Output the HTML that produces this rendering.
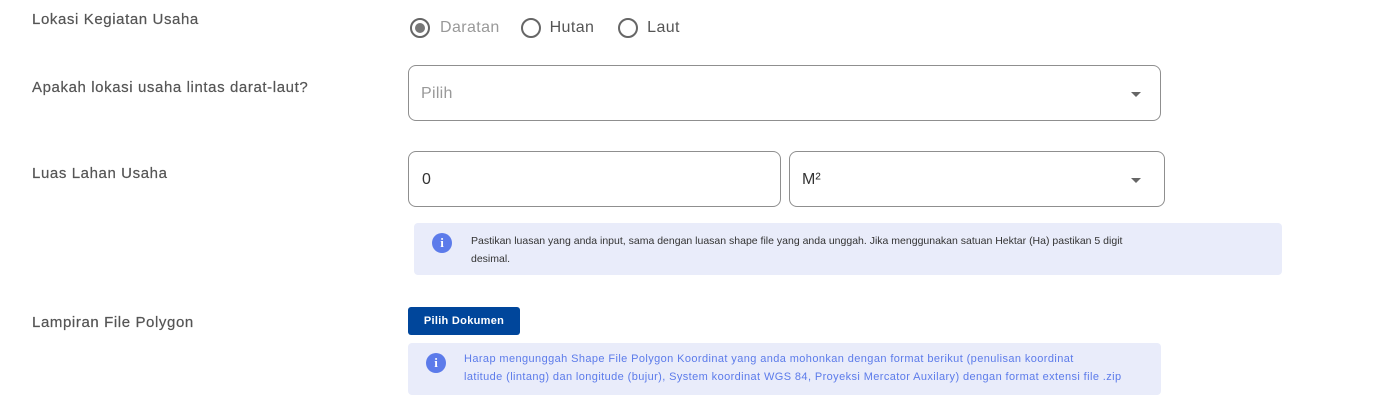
<!DOCTYPE html>
<html><head><meta charset="utf-8"><style>
body{margin:0;width:1382px;height:405px;background:#fff;font-family:"Liberation Sans",sans-serif;position:relative;overflow:hidden}
.a{position:absolute}
.lbl{left:32px;font-size:15px;color:#555;letter-spacing:0.6px;-webkit-text-stroke:0.2px #555}
.box{border:1px solid #8f8f8f;border-radius:8px;box-sizing:border-box;background:#fff}
.caret{position:absolute;width:0;height:0;border-left:5px solid transparent;border-right:5px solid transparent;border-top:5px solid #666}
.radio{display:inline-block;width:20px;height:20px;border:2px solid #666;border-radius:50%;box-sizing:border-box;vertical-align:middle;position:relative}
.info{background:#e9ecfa;border-radius:4px}
.ic{position:absolute;width:20px;height:20px;border-radius:50%;background:#5c7bea;color:#fff;font-size:13px;font-weight:bold;text-align:center;line-height:20px;font-family:"Liberation Serif",serif}
</style></head><body>
<div class="a lbl" style="top:11px">Lokasi Kegiatan Usaha</div>
<div class="a lbl" style="top:79px">Apakah lokasi usaha lintas darat-laut?</div>
<div class="a lbl" style="top:165px">Luas Lahan Usaha</div>
<div class="a lbl" style="top:314px">Lampiran File Polygon</div>

<div class="a" style="left:410px;top:18px;font-size:16px;line-height:20px;color:#555;white-space:nowrap;letter-spacing:0.4px">
<span class="radio"><span style="position:absolute;left:3px;top:3px;width:10px;height:10px;border-radius:50%;background:#777"></span></span><span style="color:#999;margin-left:10px;vertical-align:middle">Daratan</span>
<span class="radio" style="margin-left:16px"></span><span style="margin-left:9px;vertical-align:middle">Hutan</span>
<span class="radio" style="margin-left:19px"></span><span style="margin-left:9px;vertical-align:middle">Laut</span>
</div>

<div class="a box" style="left:408px;top:65px;width:753px;height:56px"><span class="a" style="left:12px;top:19px;font-size:16px;color:#999;letter-spacing:0.3px">Pilih</span><span class="caret" style="left:722px;top:26px"></span></div>

<div class="a box" style="left:408px;top:151px;width:373px;height:56px"><span class="a" style="left:13px;top:19px;font-size:16px;color:#333">0</span></div>
<div class="a box" style="left:789px;top:151px;width:376px;height:56px"><span class="a" style="left:12px;top:19px;font-size:16px;color:#333">M²</span><span class="caret" style="left:341px;top:26px"></span></div>

<div class="a info" style="left:414px;top:223px;width:868px;height:52px">
<div class="ic" style="left:18px;top:10px">i</div>
<div class="a" style="left:57px;top:9px;white-space:nowrap;font-size:10.5px;line-height:18px;color:#333">Pastikan luasan yang anda input, sama dengan luasan shape file yang anda unggah. Jika menggunakan satuan Hektar (Ha) pastikan 5 digit<br>desimal.</div>
</div>

<div class="a" style="left:408px;top:307px;width:112px;height:28px;background:#00469b;border-radius:3px;color:#fff;font-size:11px;font-weight:bold;text-align:center;line-height:28px;letter-spacing:0.3px">Pilih Dokumen</div>

<div class="a info" style="left:408px;top:343px;width:753px;height:52px">
<div class="ic" style="left:18px;top:10px">i</div>
<div class="a" style="left:56px;top:7px;white-space:nowrap;font-size:11px;line-height:18px;color:#5c7bea;letter-spacing:0.4px">Harap mengunggah Shape File Polygon Koordinat yang anda mohonkan dengan format berikut (penulisan koordinat<br>latitude (lintang) dan longitude (bujur), System koordinat WGS 84, Proyeksi Mercator Auxilary) dengan format extensi file .zip</div>
</div>
</body></html>
